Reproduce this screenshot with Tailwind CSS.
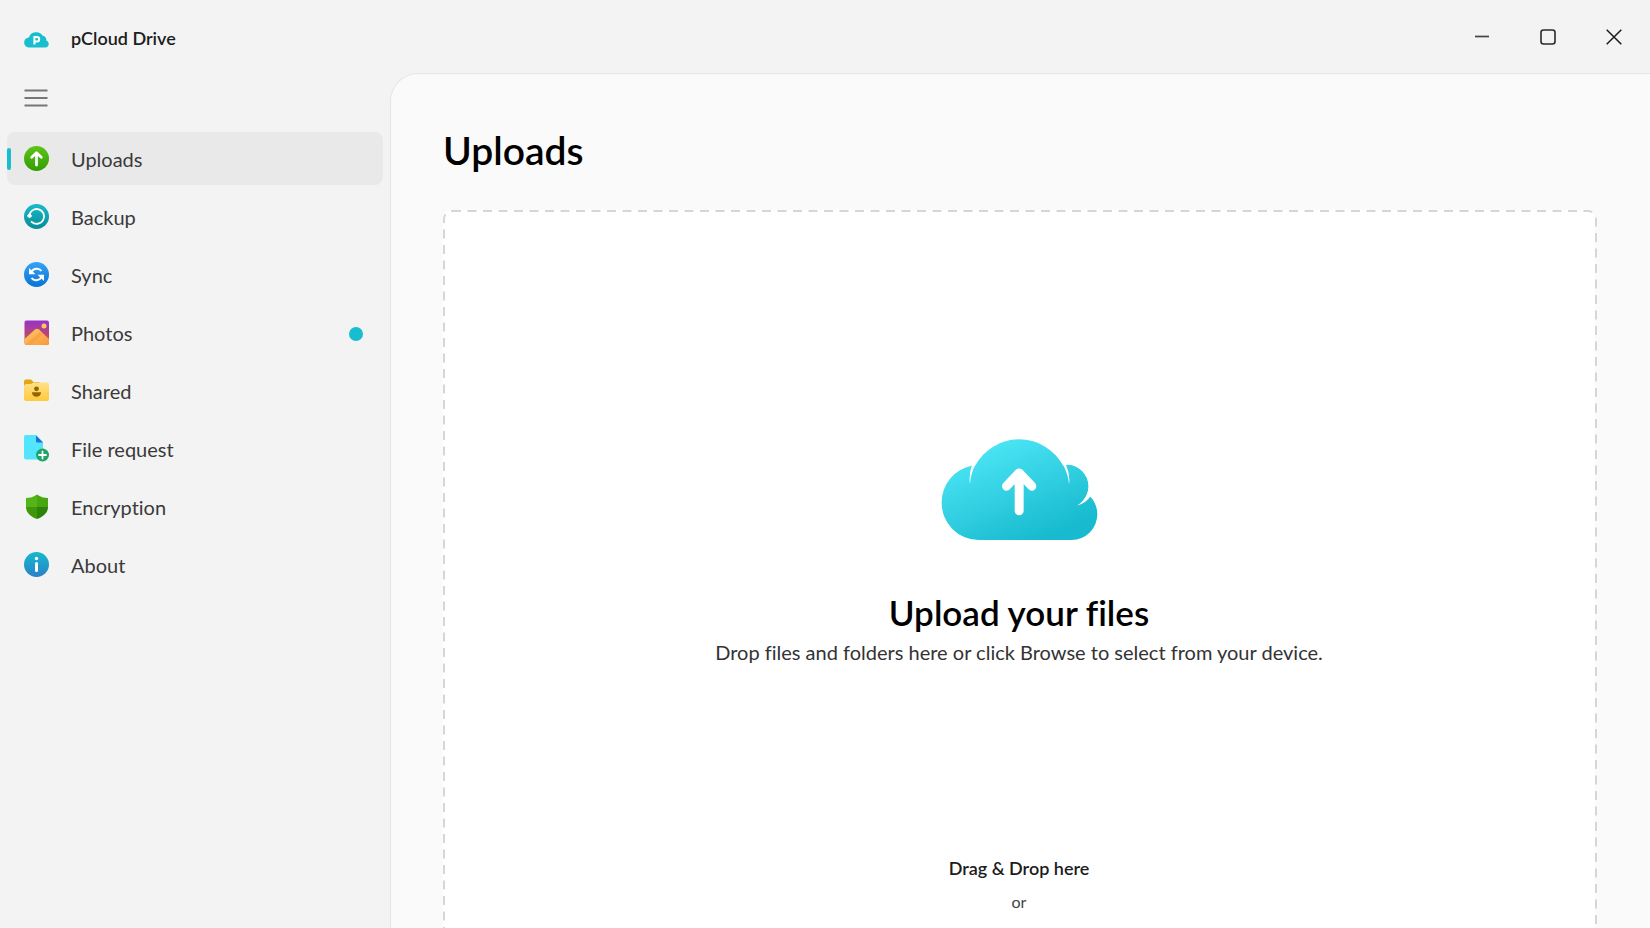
<!DOCTYPE html>
<html lang="en">

<head>
    <meta charset="UTF-8">
    <meta name="viewport" content="width=device-width, initial-scale=1.0">
    <script src="https://cdn.jsdelivr.net/npm/@tailwindcss/browser@4"></script>
    <title>pCloud Drive</title>
</head>

<body class="h-screen overflow-hidden flex flex-col bg-[#f3f3f3] font-['Lato',sans-serif] [font-variant-ligatures:none] text-[#1c1c1c]">
    <header class="flex-none h-[73px] flex items-center justify-between">
        <div class="flex items-center gap-[22px] pl-6 pt-[2px]">
            <svg class="w-[25px] h-4 mt-1" viewBox="0 0 25 16">
                <path d="M4.800 15.500A4.800 4.800 0 0 1 .2 10.500 4.800 4.800 0 0 1 4.800 5.500 7.800 7.800 0 0 1 18.800 3.800 4.500 4.500 0 0 1 22.300 8.500 3.600 3.600 0 0 1 21 15.500z" fill="#17bed0" />
                <path d="M10.400 12.500V5h2.600a2.200 2.200 0 0 1 0 4.400h-2.600" fill="none" stroke="#fff" stroke-width="2" />
            </svg>
            <h1 class="text-lg font-semibold">pCloud Drive</h1>
        </div>
        <div class="flex items-center pr-[3px]">
            <button aria-label="Minimize" class="w-[66px] h-12 flex items-center justify-center hover:bg-black/5">
                <svg class="size-4" viewBox="0 0 16 16"><path d="M1 7.500h14" stroke="#444" stroke-width="1.700" /></svg>
            </button>
            <button aria-label="Maximize" class="w-[66px] h-12 flex items-center justify-center hover:bg-black/5">
                <svg class="size-4" viewBox="0 0 16 16" fill="none"><rect x="1" y="1" width="14" height="14" rx="2.500" stroke="#2a2a2a" stroke-width="1.600" /></svg>
            </button>
            <button aria-label="Close" class="w-[66px] h-12 flex items-center justify-center hover:bg-black/5">
                <svg class="size-4" viewBox="0 0 16 16"><path d="M.7.700l14.600 14.600M15.300.700L.7 15.300" stroke="#1c1c1c" stroke-width="1.500" /></svg>
            </button>
        </div>
    </header>

    <div class="grow min-h-0 flex">
        <aside class="flex-none w-[390px] pl-[7px] pr-[7px]">
            <button aria-label="Menu" class="flex items-center w-[58px] h-[50px] pl-[17px] mb-[9px]">
                <svg class="w-6 h-5" viewBox="0 0 24 20"><path d="M.5 2.500h23M.5 10h23M.5 17.500h23" stroke="#777" stroke-width="2" /></svg>
            </button>
            <nav class="flex flex-col gap-[5px] text-xl text-[#3a3a3a]">
                <a href="#uploads" aria-current="page" class="relative flex items-center gap-[22px] h-[53px] pl-[17px] rounded-lg bg-[#e9e9e9]">
                    <span class="absolute left-0 top-4 w-1 h-[22px] rounded-full bg-[#17bed0]"></span>
                    <svg class="size-[25px]" viewBox="0 0 25 25">
                        <defs><linearGradient id="green" x2="0" y2="1"><stop stop-color="#5cc419" /><stop offset="1" stop-color="#329c04" /></linearGradient></defs>
                        <circle cx="12.500" cy="12.500" r="12.500" fill="url(#green)" />
                        <path d="M12.500 19V7M7.700 11.300l4.800-4.600 4.800 4.600" fill="none" stroke="#fff" stroke-width="2.800" stroke-linecap="round" stroke-linejoin="round" />
                    </svg>
                    Uploads
                </a>
                <a href="#backup" class="flex items-center gap-[22px] h-[53px] pl-[17px] rounded-lg hover:bg-[#e9e9e9]">
                    <svg class="size-[25px]" viewBox="0 0 25 25">
                        <defs><linearGradient id="teal" x2="0" y2="1"><stop stop-color="#16bccb" /><stop offset="1" stop-color="#078c96" /></linearGradient></defs>
                        <circle cx="12.500" cy="12.500" r="12.500" fill="url(#teal)" />
                        <path d="M5.300 12A7.400 7.400 0 1 1 7.600 17.800" fill="none" stroke="#fff" stroke-width="1.800" stroke-linecap="round" />
                        <path d="M2.800 12l2.700-3 2.700 3-2.500 2.200z" fill="#fff" />
                    </svg>
                    Backup
                </a>
                <a href="#sync" class="flex items-center gap-[22px] h-[53px] pl-[17px] rounded-lg hover:bg-[#e9e9e9]">
                    <svg class="size-[25px]" viewBox="0 0 25 25">
                        <defs><linearGradient id="blue" x2="0" y2="1"><stop stop-color="#36a3f8" /><stop offset="1" stop-color="#0873d4" /></linearGradient></defs>
                        <circle cx="12.500" cy="12.500" r="12.500" fill="url(#blue)" />
                        <path d="M7.500 9.800C9.500 6.200 15 5.600 17.500 9M17.500 15.300c-2 3.400-7.500 4-10 .7" fill="none" stroke="#fff" stroke-width="2" />
                        <path d="M5 6v6.200h6.500L9 9.700zM20 19v-6.200h-6.500l2.500 2.500z" fill="#fff" />
                    </svg>
                    Sync
                </a>
                <a href="#photos" class="flex items-center gap-[22px] h-[53px] pl-[17px] pr-5 rounded-lg hover:bg-[#e9e9e9]">
                    <svg class="size-[25px]" viewBox="0 0 25 25">
                        <defs>
                            <linearGradient id="sky" x2="0" y2="1"><stop stop-color="#9631d0" /><stop offset=".6" stop-color="#b9476f" /><stop offset="1" stop-color="#d06a4c" /></linearGradient>
                            <linearGradient id="hill" x2="1" y2="1"><stop stop-color="#ffcb66" /><stop offset="1" stop-color="#f9973a" /></linearGradient>
                            <clipPath id="frame"><rect x=".5" y=".5" width="24.500" height="24.500" rx="2" /></clipPath>
                        </defs>
                        <g clip-path="url(#frame)">
                            <path d="M0 0h25v25H0z" fill="url(#sky)" />
                            <path d="M0 19.500L11 9.600q2-1.700 4 0L25 19v6H0z" fill="url(#hill)" />
                            <path d="M1 25L15.500 12.500l3 1.500L7 25z" fill="#f79a40" opacity=".6" />
                            <circle cx="20" cy="6" r="2.500" fill="#ffc95a" />
                        </g>
                    </svg>
                    Photos
                    <span class="ml-auto mt-[3px] size-[14px] rounded-full bg-[#17bed0]"></span>
                </a>
                <a href="#shared" class="flex items-center gap-[22px] h-[53px] pl-[17px] rounded-lg hover:bg-[#e9e9e9]">
                    <svg class="size-[25px]" viewBox="0 0 25 25">
                        <defs><linearGradient id="folder" x2="0" y2="1"><stop stop-color="#ffe08a" /><stop offset="1" stop-color="#ffca3a" /></linearGradient></defs>
                        <path d="M0 9V3.500A2 2 0 0 1 2 1.500h5l2.500 2.500h6v5z" fill="#e3a615" />
                        <path d="M0 8a2.500 2.500 0 0 1 2.500-2H7l2.500-1.500H23a2 2 0 0 1 2 2V21a2 2 0 0 1-2 2H2a2 2 0 0 1-2-2z" fill="url(#folder)" />
                        <circle cx="12.500" cy="10.800" r="2.400" fill="#946400" />
                        <path d="M8 14.300h9c0 6-9 6-9 0z" fill="#946400" />
                    </svg>
                    Shared
                </a>
                <a href="#request" class="flex items-center gap-[22px] h-[53px] pl-[17px] rounded-lg hover:bg-[#e9e9e9]">
                    <svg class="w-[25px] h-[27px]" viewBox="0 0 25 27">
                        <path d="M2 0h10l7 7v17.500H2a2 2 0 0 1-2-2V2a2 2 0 0 1 2-2z" fill="#52e5fd" />
                        <path d="M12 .500L19 7.500h-5.500A1.500 1.500 0 0 1 12 6z" fill="#1e72d2" />
                        <circle cx="18.500" cy="20" r="6.500" fill="#1ca566" />
                        <path d="M18.500 16.500v7M15 20h7" stroke="#fff" stroke-width="1.800" stroke-linecap="round" />
                    </svg>
                    File request
                </a>
                <a href="#encryption" class="flex items-center gap-[22px] h-[53px] pl-[17px] rounded-lg hover:bg-[#e9e9e9]">
                    <svg class="size-[25px]" viewBox="0 0 25 25">
                        <defs><clipPath id="shield"><path d="M13 .500Q18 4 24 4v9c0 6-5 10-11 12C7 23 2 19 2 13V4q6 0 11-3.500z" /></clipPath></defs>
                        <g clip-path="url(#shield)">
                            <path d="M2 0h11v13H2z" fill="#55b516" />
                            <path d="M13 0h11v13H13z" fill="#48a611" />
                            <path d="M2 13h11v12H2z" fill="#3f980c" />
                            <path d="M13 13h11v12H13z" fill="#2d8209" />
                        </g>
                    </svg>
                    Encryption
                </a>
                <a href="#about" class="flex items-center gap-[22px] h-[53px] pl-[17px] rounded-lg hover:bg-[#e9e9e9]">
                    <svg class="size-[25px]" viewBox="0 0 25 25">
                        <defs><linearGradient id="info" x2="0" y2="1"><stop stop-color="#16b9cd" /><stop offset="1" stop-color="#2a80c8" /></linearGradient></defs>
                        <circle cx="12.500" cy="12.500" r="12.500" fill="url(#info)" />
                        <circle cx="12.500" cy="6.500" r="1.700" fill="#fff" />
                        <path d="M12.500 11.500v7" stroke="#fff" stroke-width="3" stroke-linecap="round" />
                    </svg>
                    About
                </a>
            </nav>
        </aside>

        <main class="grow min-w-0 overflow-hidden rounded-tl-[28px] border-t border-l border-[#e5e5e5] bg-[#fafafa] pl-[52px] pr-[55px] pt-[50px]">
            <h2 class="text-[39px] leading-[52px] font-semibold text-black">Uploads</h2>
            <section class="relative mt-[34px] rounded-lg bg-white flex flex-col items-center pt-[228px] pb-[120px]">
                <!-- dashed outline, css borders have too short dashes -->
                <svg class="absolute inset-0 w-full h-full overflow-visible" fill="none">
                    <rect x="1" y="1" width="100%" height="100%" rx="8" stroke="#d6d6d6" stroke-width="2" stroke-dasharray="9 6.500" />
                </svg>
                <svg class="w-[157px] h-[103px]" viewBox="60 52 472 308">
                    <defs>
                        <linearGradient id="cloud" gradientUnits="userSpaceOnUse" x1="200" y1="60" x2="330" y2="370">
                            <stop stop-color="#4de6f6" /><stop offset="1" stop-color="#17bace" />
                        </linearGradient>
                    </defs>
                    <path d="M172 358A112 112 0 0 1 62 246A112 112 0 0 1 155 134H163A150 150 0 0 1 427 134L437 132A64 64 0 0 1 503 197Q503 213 498 222L506 225A78 78 0 0 1 530 281A78 78 0 0 1 453 358z" fill="url(#cloud)" />
                    <path d="M164 130A150 150 0 0 0 147 190Q143 160 154 130zM426 130A150 150 0 0 1 445 190Q449 160 435 130zM502 212Q492 240 470 254Q497 246 509 226z" fill="#fff" />
                    <path d="M295 270V160M257 196l38-40 38 40" fill="none" stroke="#fff" stroke-width="27" stroke-linecap="round" stroke-linejoin="round" />
                </svg>
                <h3 class="mt-[49px] text-[35px] leading-[44px] font-semibold text-black">Upload your files</h3>
                <p class="mt-1 text-xl text-[#333]">Drop files and folders here or click Browse to select from your device.</p>
                <p class="mt-[188px] text-lg font-semibold">Drag &amp; Drop here</p>
                <p class="mt-2 text-base text-[#444]">or</p>
            </section>
        </main>
    </div>
</body>

</html>
